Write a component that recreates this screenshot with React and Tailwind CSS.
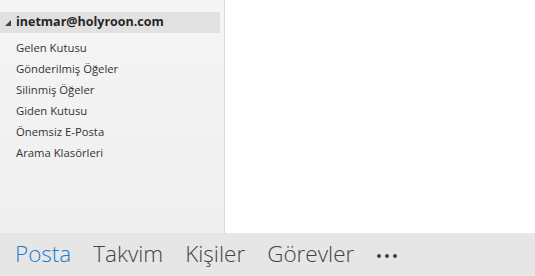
// App.jsx — Outlook folder pane
const folders = [
  'Gelen Kutusu',
  'Gönderilmiş Öğeler',
  'Silinmiş Öğeler',
  'Giden Kutusu',
  'Önemsiz E-Posta',
  'Arama Klasörleri',
]

const tabs = ['Posta', 'Takvim', 'Kişiler', 'Görevler']

function App() {
  return (
    <div
      className="w-[535px] h-[276px] flex flex-col bg-white overflow-hidden"
      style={{ fontFamily: '"Open Sans", "Noto Sans", sans-serif' }}
    >
      {/* panes */}
      <div className="flex flex-1 min-h-0">
        {/* folder pane */}
        <div className="w-[225px] bg-gradient-to-b from-[#f5f5f5] to-[#efefef] border-r border-[#dcdcdc] pt-[12px]">
          <div className="w-[220px] h-[21px] bg-[#e1e1e1] flex items-center pl-[5px]">
            <svg width="6" height="6" viewBox="0 0 6 6" className="mr-[5px]">
              <polygon points="6,0 6,6 0,6" fill="#444" />
            </svg>
            <span className="text-[12.5px] font-bold text-[#262626] leading-none">
              inetmar@holyroon.com
            </span>
          </div>
          <div className="pt-[5px]">
            {folders.map(f => (
              <div key={f} className="h-[21px] flex items-center pl-[16px] text-[11.3px] text-[#333]">
                {f}
              </div>
            ))}
          </div>
        </div>

        {/* reading pane */}
        <div className="flex-1 bg-white" />
      </div>

      {/* navigation bar */}
      <div className="h-[43px] bg-[#e6e6e6] flex items-center pl-[15px] gap-[22px]">
        {tabs.map((t, i) => (
          <span
            key={t}
            className={`text-[22.5px] font-light leading-none ${i === 0 ? 'text-[#1f7bd0]' : 'text-[#444]'}`}
          >
            {t}
          </span>
        ))}
        <span className="flex gap-[4px] ml-[1px] mt-[2px]">
          <span className="w-[4px] h-[4px] rounded-full bg-[#444]" />
          <span className="w-[4px] h-[4px] rounded-full bg-[#444]" />
          <span className="w-[4px] h-[4px] rounded-full bg-[#444]" />
        </span>
      </div>
    </div>
  )
}

export default App
